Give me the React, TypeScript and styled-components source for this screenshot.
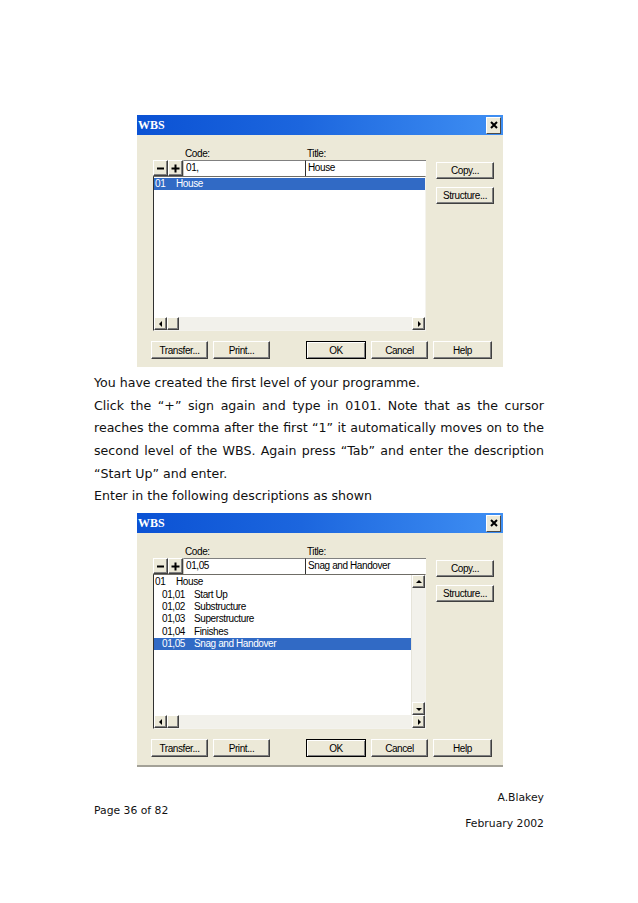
import React from 'react';
import styled, { createGlobalStyle } from 'styled-components';

const Global = createGlobalStyle`
  html, body { margin: 0; padding: 0; background: #ffffff; }
  body { width: 638px; }
`;

const Page = styled.div`
  width: 638px;
  height: 903px;
  box-sizing: border-box;
  padding-top: 115px;
  display: flex;
  flex-direction: column;
  background: #ffffff;
`;

const Dialog = styled.div<{ $shadow?: boolean }>`
  width: 366px;
  margin-left: 137px;
  background: #ece9d8;
  display: flex;
  flex-direction: column;
  font-family: "Liberation Sans", Arial, sans-serif;
  font-size: 10px;
  letter-spacing: -0.4px;
  color: #000;
  border-bottom: ${p => (p.$shadow ? '2px solid #a3a197' : '0')};
`;

const TitleBar = styled.div`
  height: 20px;
  display: flex;
  align-items: center;
  justify-content: space-between;
  padding: 0 2px 0 1px;
  background: linear-gradient(to right, #0b52d4 0%, #1c66de 45%, #3f8ff3 100%);
  color: #fff;
  font-family: "Liberation Serif", serif;
  font-weight: bold;
  font-size: 12px;
  letter-spacing: 0;
`;

const CloseBox = styled.div`
  width: 13px;
  height: 15px;
  background: #ece9d8;
  border: 1px solid;
  border-color: #fff #4a4a4a #4a4a4a #fff;
  display: flex;
  align-items: center;
  justify-content: center;
`;

const Body = styled.div`
  display: grid;
  grid-template-columns: 273px 58px;
  column-gap: 10px;
  padding: 13px 0 0 16px;
`;

const Main = styled.div`
  display: flex;
  flex-direction: column;
`;

const FieldGrid = styled.div<{ $h: number }>`
  display: grid;
  grid-template-columns: 15px 15px 122px 121px;
  height: ${p => p.$h}px;
  line-height: ${p => p.$h}px;
`;

const Label = styled.div<{ $col: number }>`
  grid-column: ${p => p.$col};
  padding-left: 2px;
`;

const SignButton = styled.div`
  box-sizing: border-box;
  background: #ece9d8;
  border: 1px solid;
  border-color: #fff #404040 #404040 #fff;
  box-shadow: inset -1px -1px 0 #808080;
  display: flex;
  align-items: center;
  justify-content: center;
`;

const Field = styled.div<{ $dark?: boolean }>`
  box-sizing: border-box;
  background: #fff;
  border-top: 1px solid #808080;
  border-left: 1px solid ${p => (p.$dark ? '#303030' : '#c8c6bc')};
  padding-left: 2px;
  line-height: 14px;
  white-space: nowrap;
  overflow: hidden;
`;

const ListBox = styled.div`
  box-sizing: border-box;
  height: 155px;
  border: 1px solid;
  border-color: #6f6d66 #f4f3ee #f4f3ee #303030;
  background: #fff;
  display: flex;
  flex-direction: column;
`;

const ListArea = styled.div`
  flex: 1;
  display: flex;
  min-height: 0;
`;

const Items = styled.div`
  flex: 1;
  padding-top: 1px;
`;

const Row = styled.div<{ $sel?: boolean; $level: number }>`
  height: 12.4px;
  line-height: 12.4px;
  display: grid;
  grid-template-columns: ${p => (p.$level === 1 ? '21px 1fr' : '32px 1fr')};
  padding-left: ${p => (p.$level === 1 ? 1 : 8)}px;
  background: ${p => (p.$sel ? '#316ac5' : 'transparent')};
  color: ${p => (p.$sel ? '#fff' : '#000')};
  white-space: nowrap;
`;

const VScroll = styled.div`
  width: 13px;
  display: flex;
  flex-direction: column;
  justify-content: space-between;
  background: #f2f1eb;
  border-left: 1px solid #e6e4da;
`;

const HScroll = styled.div`
  height: 13px;
  display: flex;
  background: #f2f1eb;
`;

const ArrowBtn = styled.div<{ $w?: number }>`
  box-sizing: border-box;
  width: ${p => p.$w ?? 13}px;
  height: 13px;
  flex: none;
  background: #ece9d8;
  border: 1px solid;
  border-color: #fff #404040 #404040 #fff;
  box-shadow: inset -1px -1px 0 #808080;
  display: flex;
  align-items: center;
  justify-content: center;
`;

const Track = styled.div`
  flex: 1;
`;

const Side = styled.div`
  display: flex;
  flex-direction: column;
  gap: 8px;
  padding-top: 14px;
`;

const Button = styled.div<{ $w?: number; $def?: boolean; $h?: number }>`
  box-sizing: border-box;
  width: ${p => p.$w ?? 58}px;
  height: ${p => p.$h ?? 18}px;
  flex: none;
  background: #ece9d8;
  border: 1px solid;
  border-color: ${p => (p.$def ? '#000 #000 #000 #000' : '#fff #404040 #404040 #fff')};
  box-shadow: ${p =>
    p.$def ? 'inset 1px 1px 0 #fff, inset -1px -1px 0 #808080' : 'inset -1px -1px 0 #808080'};
  display: flex;
  align-items: center;
  justify-content: center;
  white-space: nowrap;
`;

const ButtonBar = styled.div`
  display: flex;
  justify-content: space-between;
  padding: 10px 11px 8px 14px;
`;

const Group = styled.div`
  display: flex;
  gap: 5px;
`;

const Prose = styled.div`
  width: 450px;
  margin: 5px 0 5px 94px;
  font-family: "DejaVu Sans", Verdana, sans-serif;
  font-size: 12.6px;
  color: #111;
`;

const Line = styled.div<{ $full?: boolean }>`
  height: 22.7px;
  line-height: 22.7px;
  text-align: ${p => (p.$full ? 'justify' : 'left')};
  text-align-last: ${p => (p.$full ? 'justify' : 'left')};
  white-space: nowrap;
`;

const PageFooter = styled.div`
  width: 450px;
  margin: 24px 0 0 94px;
  display: grid;
  grid-template-rows: 13px 13px 13px;
  line-height: 13px;
  font-family: "DejaVu Sans", Verdana, sans-serif;
  font-size: 10.8px;
  color: #111;
`;

const FootText = styled.div<{ $right?: boolean }>`
  justify-self: ${p => (p.$right ? 'end' : 'start')};
`;

type Dir = 'left' | 'right' | 'up' | 'down';
const Tri = ({ dir }: { dir: Dir }) => {
  const pts: Record<Dir, string> = {
    left: '5,1 5,7 2,4',
    right: '3,1 3,7 6,4',
    up: '1,5 7,5 4,2',
    down: '1,3 7,3 4,6',
  };
  return (
    <svg width="8" height="8" viewBox="0 0 8 8">
      <polygon points={pts[dir]} fill="#000" />
    </svg>
  );
};

const Minus = () => (
  <svg width="9" height="9" viewBox="0 0 9 9">
    <rect x="1" y="3.5" width="7" height="2" fill="#000" />
  </svg>
);

const Plus = () => (
  <svg width="9" height="9" viewBox="0 0 9 9">
    <rect x="0.5" y="3.5" width="8" height="2" fill="#000" />
    <rect x="3.5" y="0.5" width="2" height="8" fill="#000" />
  </svg>
);

const CloseX = () => (
  <svg width="8" height="8" viewBox="0 0 8 8">
    <path d="M1 1 L7 7 M7 1 L1 7" stroke="#000" strokeWidth="2" />
  </svg>
);

type Item = { code: string; title: string; level: number; sel?: boolean };

const WbsDialog = ({
  code,
  title,
  items,
  vscroll,
  shadow,
}: {
  code: string;
  title: string;
  items: Item[];
  vscroll?: boolean;
  shadow?: boolean;
}) => (
  <Dialog $shadow={shadow}>
    <TitleBar>
      <span>WBS</span>
      <CloseBox>
        <CloseX />
      </CloseBox>
    </TitleBar>
    <Body>
      <Main>
        <FieldGrid $h={12}>
          <Label $col={3}>Code:</Label>
          <Label $col={4}>Title:</Label>
        </FieldGrid>
        <FieldGrid $h={16}>
          <SignButton>
            <Minus />
          </SignButton>
          <SignButton>
            <Plus />
          </SignButton>
          <Field>{code}</Field>
          <Field $dark>{title}</Field>
        </FieldGrid>
        <ListBox>
          <ListArea>
            <Items>
              {items.map((it, i) => (
                <Row key={i} $sel={it.sel} $level={it.level}>
                  <span>{it.code}</span>
                  <span>{it.title}</span>
                </Row>
              ))}
            </Items>
            {vscroll && (
              <VScroll>
                <ArrowBtn>
                  <Tri dir="up" />
                </ArrowBtn>
                <ArrowBtn>
                  <Tri dir="down" />
                </ArrowBtn>
              </VScroll>
            )}
          </ListArea>
          <HScroll>
            <ArrowBtn>
              <Tri dir="left" />
            </ArrowBtn>
            <ArrowBtn $w={12} />
            <Track />
            <ArrowBtn>
              <Tri dir="right" />
            </ArrowBtn>
          </HScroll>
        </ListBox>
      </Main>
      <Side>
        <Button $h={17}>Copy...</Button>
        <Button $h={17}>Structure...</Button>
      </Side>
    </Body>
    <ButtonBar>
      <Group>
        <Button $w={57}>Transfer...</Button>
        <Button $w={57}>Print...</Button>
      </Group>
      <Group>
        <Button $w={60} $def>
          OK
        </Button>
        <Button $w={57}>Cancel</Button>
        <Button $w={59}>Help</Button>
      </Group>
    </ButtonBar>
  </Dialog>
);

const firstItems: Item[] = [{ code: '01', title: 'House', level: 1, sel: true }];

const secondItems: Item[] = [
  { code: '01', title: 'House', level: 1 },
  { code: '01,01', title: 'Start Up', level: 2 },
  { code: '01,02', title: 'Substructure', level: 2 },
  { code: '01,03', title: 'Superstructure', level: 2 },
  { code: '01,04', title: 'Finishes', level: 2 },
  { code: '01,05', title: 'Snag and Handover', level: 2, sel: true },
];

export default function App() {
  return (
    <>
      <Global />
      <Page>
        <WbsDialog code="01," title="House" items={firstItems} />
        <Prose>
          <Line>You have created the first level of your programme.</Line>
          <Line $full>Click the “+” sign again and type in 0101. Note that as the cursor</Line>
          <Line $full>reaches the comma after the first “1” it automatically moves on to the</Line>
          <Line $full>second level of the WBS. Again press “Tab” and enter the description</Line>
          <Line>“Start Up” and enter.</Line>
          <Line>Enter in the following descriptions as shown</Line>
        </Prose>
        <WbsDialog code="01,05" title="Snag and Handover" items={secondItems} vscroll shadow />
        <PageFooter>
          <FootText $right>A.Blakey</FootText>
          <FootText>Page 36 of 82</FootText>
          <FootText $right>February 2002</FootText>
        </PageFooter>
      </Page>
    </>
  );
}
